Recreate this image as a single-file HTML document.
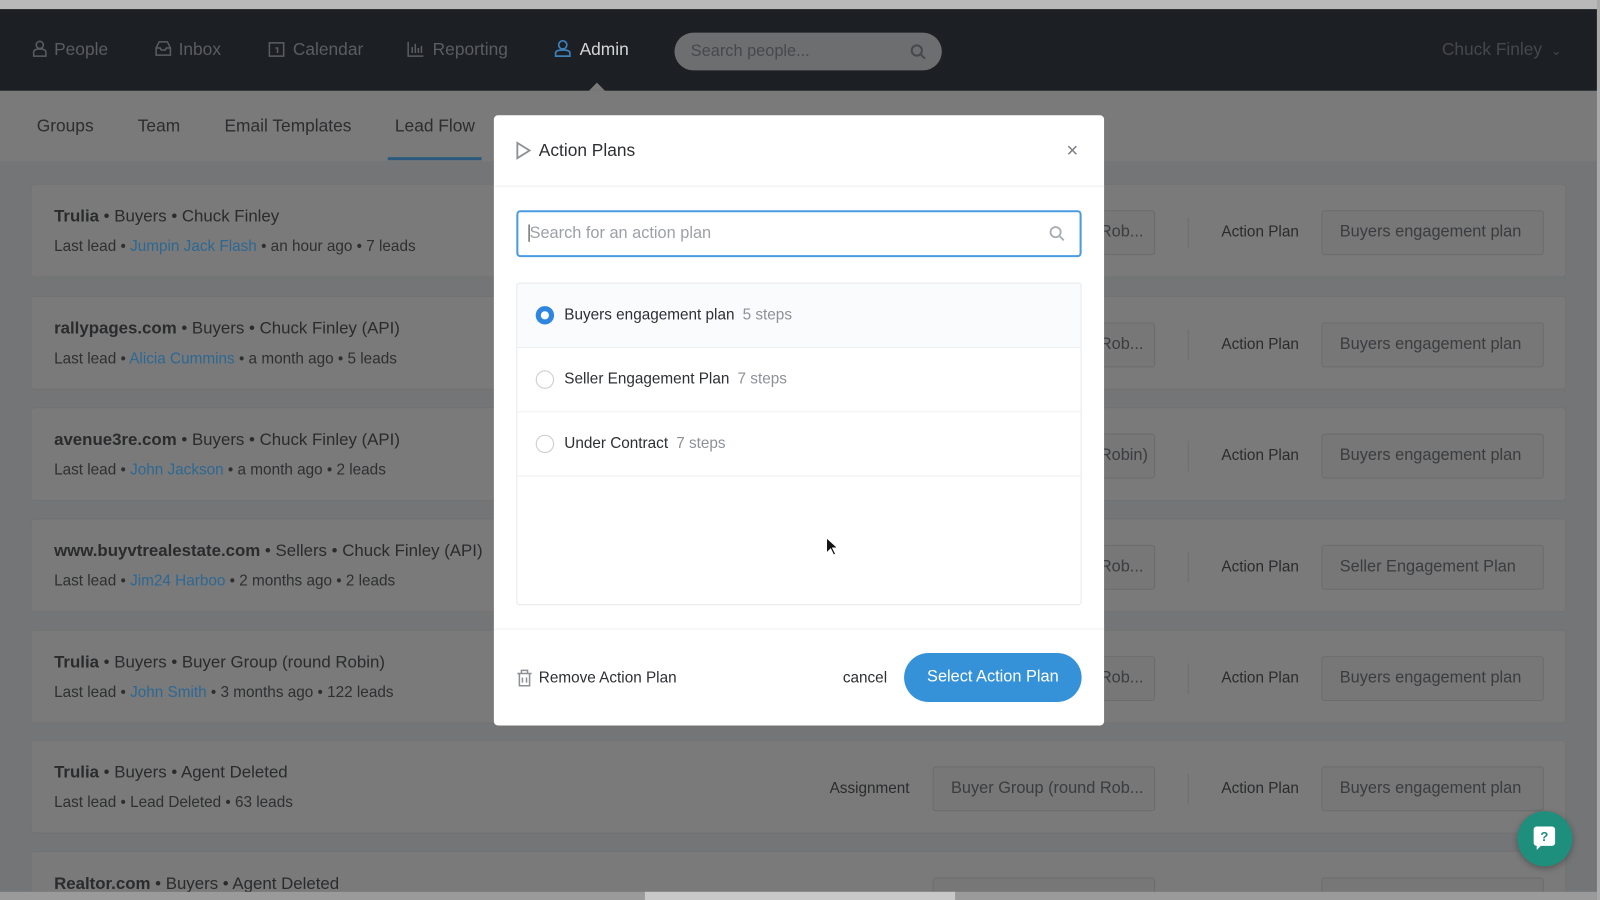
<!DOCTYPE html>
<html><head><meta charset="utf-8"><style>
*{box-sizing:border-box;margin:0;padding:0}
html,body{width:1600px;height:900px;overflow:hidden;background:#747576;font-family:"Liberation Sans",Arial,sans-serif}
#w{position:absolute;left:0;top:0;width:1568px;height:882px;transform:scale(1.0204);transform-origin:0 0;background:#747576;overflow:hidden}
.abs{position:absolute}
.top{left:0;top:0;width:1568px;height:9px;background:#b9b9b9}
.nav{left:0;top:9px;width:1565px;height:80px;background:#1c1f23}
.rstrip{left:1565px;top:0;width:3px;height:882px;background:#a9a9a9}
.ni{position:absolute;top:30px;font-size:17px;color:#5a5d62}
.sub{left:0;top:89px;width:1565px;height:69px;background:#7a7a7a}
.st{position:absolute;top:114px;font-size:17px;color:#2c2d2f}
.card{position:absolute;left:30px;width:1505px;height:92px;background:#7a7a7a;border:1px solid #727272;border-radius:4px}
.t1{position:absolute;left:22px;top:22px;font-size:16.5px;color:#2a2b2d}
.t1 b{font-weight:bold}
.t2{position:absolute;left:22px;top:52px;font-size:15px;color:#2e2f31}
.t2 a{color:#2d6894}
.lab{position:absolute;top:38px;font-size:15px;color:#2a2b2d}
.box{position:absolute;top:25px;height:44px;border:1px solid #6c6c6c;border-radius:3px;background:#777;font-size:16px;color:#3a3c3f;padding:12px 17px;white-space:nowrap;overflow:hidden}
.div{position:absolute;left:1133px;top:32px;width:1px;height:30px;background:#6e6e6e}
.modal{left:484px;top:113px;width:598px;height:598px;background:#fff;border-radius:4px}
.row{position:absolute;left:0;width:552px;height:63px;border-bottom:1px solid #eef0f2}
.rad{position:absolute;left:18px;top:22px;width:18px;height:18px;border-radius:50%;border:1.5px solid #c9ccd0;background:#fff}
.rl{position:absolute;left:46px;top:22px;font-size:15px;color:#2d2f33}
.rl span{color:#8d9196;margin-left:8px}
</style></head><body><div id="w">
<div class="abs top"></div>
<div class="abs nav">
 <div class="ni" style="left:30px"><svg width="17" height="17" viewBox="0 0 17 17" style="vertical-align:-2px;margin-right:6px" fill="none" stroke="#5a5d62" stroke-width="1.5"><circle cx="9" cy="5" r="3.5"/><path d="M3 16v-4q0-3 6-3t6 3v4z"/></svg>People</div>
 <div class="ni" style="left:151px"><svg width="18" height="17" viewBox="0 0 18 17" style="vertical-align:-2px;margin-right:6px" fill="none" stroke="#5a5d62" stroke-width="1.5"><path d="M2 8l3-6h8l3 6v7H2z M2 8h4l1 2h4l1-2h4"/></svg>Inbox</div>
 <div class="ni" style="left:263px"><svg width="16" height="16" viewBox="0 0 16 16" style="vertical-align:-2px;margin-right:8px" fill="none" stroke="#5a5d62" stroke-width="1.5"><rect x="1" y="2" width="14" height="13"/><path d="M7 7h2v5"/></svg>Calendar</div>
 <div class="ni" style="left:399px"><svg width="17" height="16" viewBox="0 0 17 16" style="vertical-align:-2px;margin-right:8px" fill="none" stroke="#5a5d62" stroke-width="1.5"><path d="M1 1v14h15M5 12V6M8 12V3M11 12V7M14 12V5"/></svg>Reporting</div>
 <div class="ni" style="left:543px;color:#d4d6d8"><svg width="17" height="17" viewBox="0 0 17 17" style="vertical-align:-2px;margin-right:8px" fill="none" stroke="#3c82bd" stroke-width="1.6"><circle cx="8.5" cy="5" r="4"/><path d="M1.5 16v-3q0-3 7-3t7 3v3z"/></svg>Admin</div>
 <div class="abs" style="left:661px;top:23px;width:262px;height:37px;border-radius:19px;background:#6d6e70;font-size:16px;color:#46484b;padding:10px 16px">Search people...<svg width="16" height="16" viewBox="0 0 16 16" style="position:absolute;right:15px;top:11px" fill="none" stroke="#46484b" stroke-width="2"><circle cx="6.5" cy="6.5" r="5"/><path d="M10.5 10.5l4 4"/></svg></div>
 <div class="ni" style="left:1413px;color:#45484c">Chuck Finley <span style="font-size:12px;margin-left:4px">&#8964;</span></div>
 <div class="abs" style="left:577px;top:72px;width:0;height:0;border-left:8px solid transparent;border-right:8px solid transparent;border-bottom:8px solid #7a7a7a"></div>
</div>
<div class="abs sub"></div>
<div class="st" style="left:36px">Groups</div>
<div class="st" style="left:135px">Team</div>
<div class="st" style="left:220px">Email Templates</div>
<div class="st" style="left:387px">Lead Flow</div>
<div class="abs" style="left:380px;top:154px;width:92px;height:3px;background:#2b5a7e"></div>

<div class="card" style="top:180px"><div class="t1"><b>Trulia</b> • Buyers • Chuck Finley</div><div class="t2">Last lead • <a>Jumpin Jack Flash</a> • an hour ago • 7 leads</div><div class="lab" style="left:782px">Assignment</div><div class="box" style="left:883px;width:218px">Buyer Group (round Rob...</div><div class="div"></div><div class="lab" style="left:1166px">Action Plan</div><div class="box" style="left:1264px;width:218px">Buyers engagement plan</div></div>
<div class="card" style="top:290px"><div class="t1"><b>rallypages.com</b> • Buyers • Chuck Finley (API)</div><div class="t2">Last lead • <a>Alicia Cummins</a> • a month ago • 5 leads</div><div class="box" style="left:883px;width:218px">Buyer Group (round Rob...</div><div class="div"></div><div class="lab" style="left:1166px">Action Plan</div><div class="box" style="left:1264px;width:218px">Buyers engagement plan</div></div>
<div class="card" style="top:399px"><div class="t1"><b>avenue3re.com</b> • Buyers • Chuck Finley (API)</div><div class="t2">Last lead • <a>John Jackson</a> • a month ago • 2 leads</div><div class="box" style="left:883px;width:218px">Buyer Group (round Robin)</div><div class="div"></div><div class="lab" style="left:1166px">Action Plan</div><div class="box" style="left:1264px;width:218px">Buyers engagement plan</div></div>
<div class="card" style="top:508px"><div class="t1"><b>www.buyvtrealestate.com</b> • Sellers • Chuck Finley (API)</div><div class="t2">Last lead • <a>Jim24 Harboo</a> • 2 months ago • 2 leads</div><div class="box" style="left:883px;width:218px">Buyer Group (round Rob...</div><div class="div"></div><div class="lab" style="left:1166px">Action Plan</div><div class="box" style="left:1264px;width:218px">Seller Engagement Plan</div></div>
<div class="card" style="top:617px"><div class="t1"><b>Trulia</b> • Buyers • Buyer Group (round Robin)</div><div class="t2">Last lead • <a>John Smith</a> • 3 months ago • 122 leads</div><div class="box" style="left:883px;width:218px">Buyer Group (round Rob...</div><div class="div"></div><div class="lab" style="left:1166px">Action Plan</div><div class="box" style="left:1264px;width:218px">Buyers engagement plan</div></div>
<div class="card" style="top:725px"><div class="t1"><b>Trulia</b> • Buyers • Agent Deleted</div><div class="t2">Last lead • Lead Deleted • 63 leads</div><div class="lab" style="left:782px">Assignment</div><div class="box" style="left:883px;width:218px">Buyer Group (round Rob...</div><div class="div"></div><div class="lab" style="left:1166px">Action Plan</div><div class="box" style="left:1264px;width:218px">Buyers engagement plan</div></div>
<div class="card" style="top:834px"><div class="t1"><b>Realtor.com</b> • Buyers • Agent Deleted</div><div class="box" style="left:883px;width:218px"></div><div class="box" style="left:1264px;width:218px"></div></div>

<div class="abs" style="left:0;top:874px;width:1565px;height:8px;background:#9a9a9a"></div>
<div class="abs" style="left:632px;top:874px;width:304px;height:8px;background:#c8c8c8"></div>

<div class="abs" style="left:1487px;top:795px;width:54px;height:54px;border-radius:50%;background:#1f8f7d;box-shadow:0 2px 6px rgba(0,0,0,.3)"><div style="position:absolute;left:16px;top:15px;width:21px;height:19px;background:#fff;border-radius:3px;font-size:13px;font-weight:bold;color:#1f8f7d;text-align:center;line-height:19px">?</div><div style="position:absolute;left:19px;top:33px;border-left:5px solid #fff;border-bottom:5px solid transparent"></div></div>

<div class="abs modal">
 <svg class="abs" style="left:21px;top:25px" width="16" height="19" viewBox="0 0 16 19" fill="none" stroke="#8d9196" stroke-width="1.8"><path d="M2 2l12 7.5L2 17z"/></svg>
 <div class="abs" style="left:44px;top:25px;font-size:17px;color:#2d2f33">Action Plans</div>
 <div class="abs" style="left:561px;top:24px;font-size:20px;color:#7d8186">×</div>
 <div class="abs" style="left:0;top:69px;width:598px;height:1px;background:#eef0f2"></div>
 <div class="abs" style="left:22px;top:93px;width:554px;height:46px;border:2px solid #4a9be0;border-radius:4px;font-size:16px;color:#9da1a6;padding:12px 10px"><span style="border-left:1px solid #333;"></span>Search for an action plan<svg width="16" height="16" viewBox="0 0 16 16" style="position:absolute;right:14px;top:13px" fill="none" stroke="#a9adb2" stroke-width="1.8"><circle cx="6.5" cy="6.5" r="5"/><path d="M10.5 10.5l4 4"/></svg></div>
 <div class="abs" style="left:22px;top:164px;width:554px;height:316px;border:1px solid #e6e8eb;border-radius:3px;overflow:hidden">
  <div class="row" style="top:0;background:#fafbfc"><div class="rad" style="border:5px solid #2f86e0"></div><div class="rl">Buyers engagement plan<span>5 steps</span></div></div>
  <div class="row" style="top:63px"><div class="rad"></div><div class="rl">Seller Engagement Plan<span>7 steps</span></div></div>
  <div class="row" style="top:126px"><div class="rad"></div><div class="rl">Under Contract<span>7 steps</span></div></div>
 </div>
 <svg class="abs" style="left:325px;top:413px" width="12" height="19" viewBox="0 0 12 19"><path d="M1 1v15l4-4 3 6 2-1-3-6h5z" fill="#111" stroke="#fff" stroke-width="1"/></svg>
 <div class="abs" style="left:0;top:503px;width:598px;height:1px;background:#f0f1f3"></div>
 <svg class="abs" style="left:22px;top:543px" width="16" height="17" viewBox="0 0 16 17" fill="none" stroke="#8d9196" stroke-width="1.5"><path d="M1 4h14M5 4V1h6v3M3 4v12h10V4M6 8v5M10 8v5"/></svg>
 <div class="abs" style="left:44px;top:543px;font-size:15px;color:#2d2f33">Remove Action Plan</div>
 <div class="abs" style="left:342px;top:543px;font-size:15px;color:#2d2f33">cancel</div>
 <div class="abs" style="left:402px;top:527px;width:174px;height:48px;border-radius:24px;background:#3592d8;color:#fff;font-size:16px;text-align:center;line-height:48px">Select Action Plan</div>
</div>
<div class="abs rstrip"></div>
</div></body></html>
